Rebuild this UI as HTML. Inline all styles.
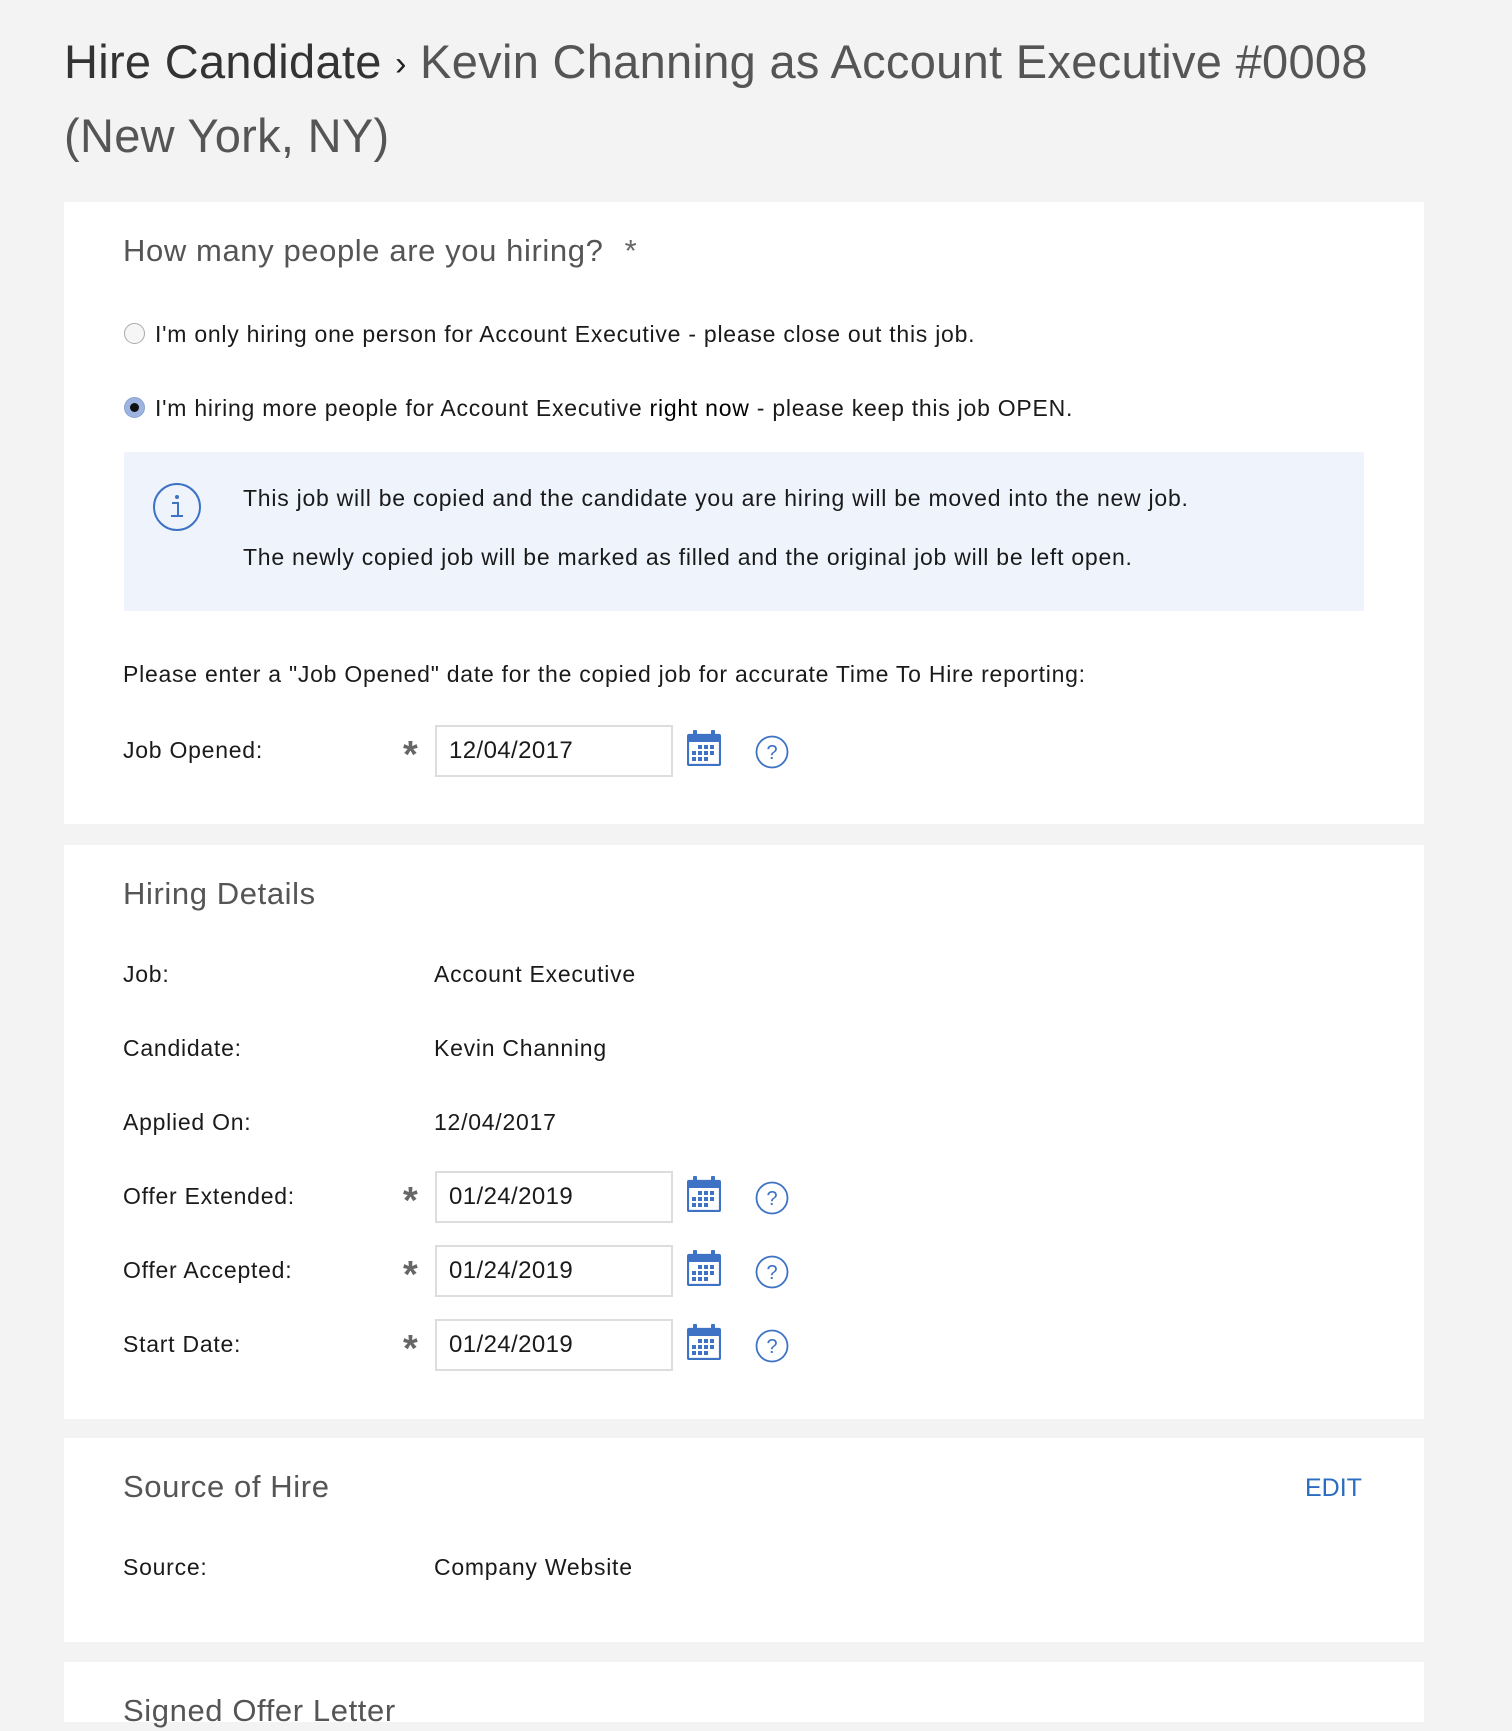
<!DOCTYPE html>
<html><head><meta charset="utf-8"><style>
*{margin:0;padding:0;box-sizing:border-box}
body{width:1512px;height:1704px;background:#f3f3f3;font-family:"Liberation Sans",sans-serif;color:#1a1a1a;position:relative;overflow:hidden}
.a{position:absolute;white-space:nowrap}
.title{left:64px;font-size:47px;color:#555;line-height:74px;letter-spacing:0.3px}
.panel{position:absolute;left:64px;width:1360px;background:#fff}
.h{font-size:31px;color:#555;line-height:40px;letter-spacing:0.6px}
.t{font-size:23px;line-height:30px;letter-spacing:0.75px}
.inp{position:absolute;left:435px;width:238px;height:52px;border:2px solid #ddd;font-size:24px;line-height:48px;padding-left:12px;letter-spacing:0.4px}
.ast{font-size:38px;color:#666;line-height:30px;font-weight:bold}
</style></head><body>
<div class="a title" style="top:25px"><span style="color:#333">Hire Candidate</span> <span style="font-size:34px;position:relative;top:-3px;color:#222">›</span> Kevin Channing as Account Executive #0008</div>
<div class="a title" style="top:99px">(New York, NY)</div>

<div class="panel" style="top:202px;height:622px"></div>
<div class="a h" style="left:123px;top:231px">How many people are you hiring? <span style="margin-left:12px;color:#666">*</span></div>
<div class="a" style="left:124px;top:323px;width:21px;height:21px;border-radius:50%;border:1.5px solid #aaa;background:#f6f6f6"></div>
<div class="a t" style="left:155px;top:319px">I'm only hiring one person for Account Executive - please close out this job.</div>
<div class="a" style="left:124px;top:397px;width:21px;height:21px;border-radius:50%;background:#9db4e0;border:1.5px solid #8aa2d0"></div>
<div class="a" style="left:130px;top:403px;width:9px;height:9px;border-radius:50%;background:#111"></div>
<div class="a t" style="left:155px;top:393px">I'm hiring more people for Account Executive <span style="color:#000">right now</span> - please keep this job OPEN.</div>
<div class="a" style="left:124px;top:452px;width:1240px;height:159px;background:#eef3fc"></div>
<svg class="a" style="left:152px;top:482px" width="50" height="50"><circle cx="25" cy="25" r="23" fill="none" stroke="#3d72c4" stroke-width="2"/><circle cx="25" cy="15" r="2" fill="#3d72c4"/><path d="M20 21h6v13M19 34h12" fill="none" stroke="#3d72c4" stroke-width="2"/></svg>
<div class="a t" style="left:243px;top:483px">This job will be copied and the candidate you are hiring will be moved into the new job.</div>
<div class="a t" style="left:243px;top:542px">The newly copied job will be marked as filled and the original job will be left open.</div>
<div class="a t" style="left:123px;top:659px">Please enter a "Job Opened" date for the copied job for accurate Time To Hire reporting:</div>

<div class="panel" style="top:845px;height:574px"></div>
<div class="a h" style="left:123px;top:874px">Hiring Details</div>
<div class="a t" style="left:123px;top:959px">Job:</div><div class="a t" style="left:434px;top:959px">Account Executive</div>
<div class="a t" style="left:123px;top:1033px">Candidate:</div><div class="a t" style="left:434px;top:1033px">Kevin Channing</div>
<div class="a t" style="left:123px;top:1107px">Applied On:</div><div class="a t" style="left:434px;top:1107px">12/04/2017</div>

<div class="panel" style="top:1438px;height:204px"></div>
<div class="a h" style="left:123px;top:1467px">Source of Hire</div>
<div class="a" style="left:1305px;top:1473px;font-size:25px;color:#2a6cc0;line-height:30px">EDIT</div>
<div class="a t" style="left:123px;top:1552px">Source:</div><div class="a t" style="left:434px;top:1552px">Company Website</div>

<div class="panel" style="top:1662px;height:60px"></div>
<div class="a h" style="left:123px;top:1691px">Signed Offer Letter</div>

<div class="a t" style="left:123px;top:735px">Job Opened:</div>
<div class="a ast" style="left:403px;top:740px">*</div>
<div class="inp" style="top:725px">12/04/2017</div>
<div class="a t" style="left:123px;top:1181px">Offer Extended:</div>
<div class="a ast" style="left:403px;top:1186px">*</div>
<div class="inp" style="top:1171px">01/24/2019</div>
<div class="a t" style="left:123px;top:1255px">Offer Accepted:</div>
<div class="a ast" style="left:403px;top:1260px">*</div>
<div class="inp" style="top:1245px">01/24/2019</div>
<div class="a t" style="left:123px;top:1329px">Start Date:</div>
<div class="a ast" style="left:403px;top:1334px">*</div>
<div class="inp" style="top:1319px">01/24/2019</div>

<svg width="0" height="0" style="position:absolute"><defs>
<symbol id="cal" viewBox="0 0 34 36"><rect x="1" y="5" width="32" height="30" rx="1" fill="none" stroke="#3d72c4" stroke-width="2.2"/><rect x="1" y="5" width="32" height="7" fill="#3d72c4"/><rect x="6" y="0" width="4" height="9" rx="1" fill="#3d72c4"/><rect x="24" y="0" width="4" height="9" rx="1" fill="#3d72c4"/>
<g fill="#3d72c4"><rect x="11" y="15" width="4" height="4"/><rect x="17" y="15" width="4" height="4"/><rect x="23" y="15" width="4" height="4"/><rect x="5" y="21" width="4" height="4"/><rect x="11" y="21" width="4" height="4"/><rect x="17" y="21" width="4" height="4"/><rect x="23" y="21" width="4" height="4"/><rect x="5" y="27" width="4" height="4"/><rect x="11" y="27" width="4" height="4"/><rect x="17" y="27" width="4" height="4"/></g></symbol>
<symbol id="hlp" viewBox="0 0 34 34"><circle cx="17" cy="17" r="15.5" fill="none" stroke="#3d72c4" stroke-width="1.8"/><text x="17" y="24" text-anchor="middle" font-family="Liberation Sans" font-size="20" fill="#3d72c4">?</text></symbol>
</defs></svg>
<svg class="a" style="left:687px;top:730px" width="34" height="36"><use href="#cal"/></svg>
<svg class="a" style="left:755px;top:735px" width="34" height="34"><use href="#hlp"/></svg>
<svg class="a" style="left:687px;top:1176px" width="34" height="36"><use href="#cal"/></svg>
<svg class="a" style="left:755px;top:1181px" width="34" height="34"><use href="#hlp"/></svg>
<svg class="a" style="left:687px;top:1250px" width="34" height="36"><use href="#cal"/></svg>
<svg class="a" style="left:755px;top:1255px" width="34" height="34"><use href="#hlp"/></svg>
<svg class="a" style="left:687px;top:1324px" width="34" height="36"><use href="#cal"/></svg>
<svg class="a" style="left:755px;top:1329px" width="34" height="34"><use href="#hlp"/></svg>
</body></html>
